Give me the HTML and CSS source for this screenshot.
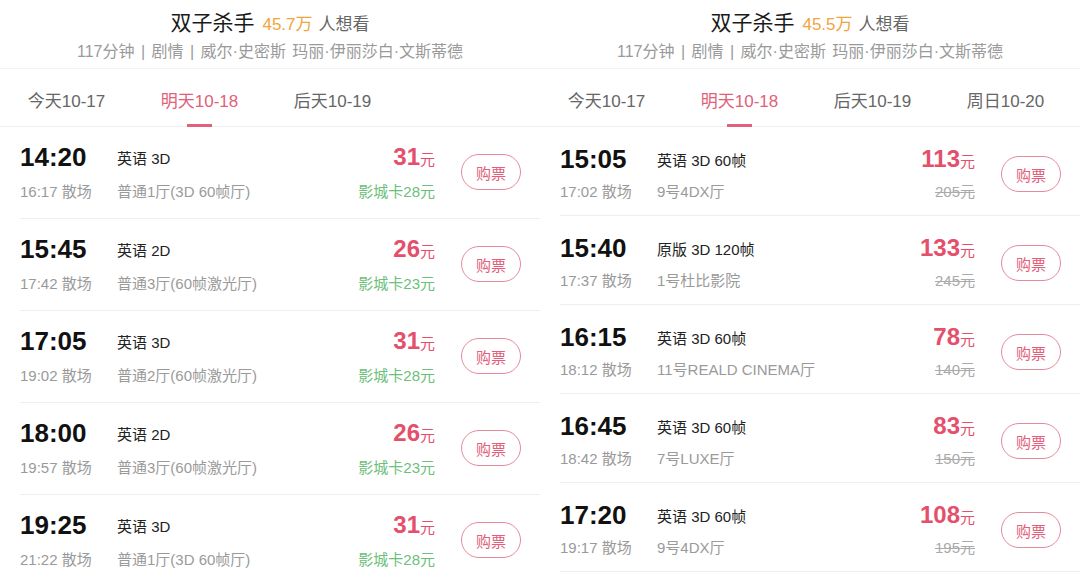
FILE: index.html
```html
<!DOCTYPE html>
<html lang="zh-CN">
<head>
    <meta charset="UTF-8">
    <meta name="viewport" content="width=device-width, initial-scale=1.0">
    <title>双子杀手 排片</title>
    <link rel="stylesheet" href="styles.css">
</head>
<body>
    <div class="panel">
        <div class="header">
            <div class="title">双子杀手 <span class="want">45.7万</span> <span class="want-label">人想看</span></div>
            <div class="info">117分钟 | 剧情 | 威尔·史密斯 玛丽·伊丽莎白·文斯蒂德</div>
        </div>
        <div class="tabs">
            <div class="tab">今天10-17</div>
            <div class="tab active">明天10-18</div>
            <div class="tab">后天10-19</div>
        </div>
        <div class="list">
            <div class="show">
                <div class="time">14:20</div>
                <div class="lang">英语 3D</div>
                <div class="price">31<small>元</small></div>
                <button class="buy">购票</button>
                <div class="end">16:17 散场</div>
                <div class="hall">普通1厅(3D 60帧厅)</div>
                <div class="card">影城卡28元</div>
            </div>
            <div class="show">
                <div class="time">15:45</div>
                <div class="lang">英语 2D</div>
                <div class="price">26<small>元</small></div>
                <button class="buy">购票</button>
                <div class="end">17:42 散场</div>
                <div class="hall">普通3厅(60帧激光厅)</div>
                <div class="card">影城卡23元</div>
            </div>
            <div class="show">
                <div class="time">17:05</div>
                <div class="lang">英语 3D</div>
                <div class="price">31<small>元</small></div>
                <button class="buy">购票</button>
                <div class="end">19:02 散场</div>
                <div class="hall">普通2厅(60帧激光厅)</div>
                <div class="card">影城卡28元</div>
            </div>
            <div class="show">
                <div class="time">18:00</div>
                <div class="lang">英语 2D</div>
                <div class="price">26<small>元</small></div>
                <button class="buy">购票</button>
                <div class="end">19:57 散场</div>
                <div class="hall">普通3厅(60帧激光厅)</div>
                <div class="card">影城卡23元</div>
            </div>
            <div class="show">
                <div class="time">19:25</div>
                <div class="lang">英语 3D</div>
                <div class="price">31<small>元</small></div>
                <button class="buy">购票</button>
                <div class="end">21:22 散场</div>
                <div class="hall">普通1厅(3D 60帧厅)</div>
                <div class="card">影城卡28元</div>
            </div>
        </div>
    </div>

    <div class="panel panel-b">
        <div class="header">
            <div class="title">双子杀手 <span class="want">45.5万</span> <span class="want-label">人想看</span></div>
            <div class="info">117分钟 | 剧情 | 威尔·史密斯 玛丽·伊丽莎白·文斯蒂德</div>
        </div>
        <div class="tabs">
            <div class="tab">今天10-17</div>
            <div class="tab active">明天10-18</div>
            <div class="tab">后天10-19</div>
            <div class="tab">周日10-20</div>
        </div>
        <div class="list">
            <div class="show">
                <div class="time">15:05</div>
                <div class="lang">英语 3D 60帧</div>
                <div class="price">113<small>元</small></div>
                <button class="buy">购票</button>
                <div class="end">17:02 散场</div>
                <div class="hall">9号4DX厅</div>
                <div class="orig">205元</div>
            </div>
            <div class="show">
                <div class="time">15:40</div>
                <div class="lang">原版 3D 120帧</div>
                <div class="price">133<small>元</small></div>
                <button class="buy">购票</button>
                <div class="end">17:37 散场</div>
                <div class="hall">1号杜比影院</div>
                <div class="orig">245元</div>
            </div>
            <div class="show">
                <div class="time">16:15</div>
                <div class="lang">英语 3D 60帧</div>
                <div class="price">78<small>元</small></div>
                <button class="buy">购票</button>
                <div class="end">18:12 散场</div>
                <div class="hall">11号REALD CINEMA厅</div>
                <div class="orig">140元</div>
            </div>
            <div class="show">
                <div class="time">16:45</div>
                <div class="lang">英语 3D 60帧</div>
                <div class="price">83<small>元</small></div>
                <button class="buy">购票</button>
                <div class="end">18:42 散场</div>
                <div class="hall">7号LUXE厅</div>
                <div class="orig">150元</div>
            </div>
            <div class="show">
                <div class="time">17:20</div>
                <div class="lang">英语 3D 60帧</div>
                <div class="price">108<small>元</small></div>
                <button class="buy">购票</button>
                <div class="end">19:17 散场</div>
                <div class="hall">9号4DX厅</div>
                <div class="orig">195元</div>
            </div>
        </div>
    </div>
</body>
</html>
```

FILE: styles.css
```css
body {
    margin: 0;
    height: 579px;
    overflow: hidden;
    display: flex;
    background: #fff;
    font-family: "Liberation Sans", "Noto Sans CJK SC", sans-serif;
    color: #222;
}
.panel {
    width: 540px;
    flex-shrink: 0;
}

/* Movie header */
.header {
    height: 68px;
    padding-top: 8px;
    box-sizing: border-box;
    text-align: center;
}
.title {
    font-size: 21px;
    line-height: 30px;
    color: #1a1a1a;
}
.want {
    font-size: 17px;
    color: #f0a53e;
    margin-left: 2px;
}
.want-label {
    font-size: 17px;
    color: #666;
}
.info {
    font-size: 16px;
    line-height: 24px;
    color: #9a9a9a;
    word-spacing: 2px;
}

/* Date tabs */
.tabs {
    display: flex;
    height: 59px;
    border-top: 1px solid #f3f3f3;
    border-bottom: 1px solid #eee;
    box-sizing: border-box;
}
.tab {
    width: 133px;
    position: relative;
    display: flex;
    align-items: center;
    justify-content: center;
    padding-top: 3px;
    font-size: 17px;
    color: #666;
}
.tab.active {
    color: #e1607a;
}
.tab.active::after {
    content: "";
    position: absolute;
    bottom: -1px;
    left: 54px;
    width: 25px;
    height: 3px;
    background: #e1607a;
}

/* Show rows */
.show {
    display: grid;
    grid-template-columns: 97px 1fr auto 60px;
    grid-template-rows: 30px 36px;
    height: 92px;
    box-sizing: border-box;
    margin-left: 20px;
    padding: 15px 19px 0 0;
    border-bottom: 1px solid #eee;
    align-items: center;
}
.panel-b .show {
    height: 89px;
    padding-top: 17px;
    grid-template-rows: 30px 32px;
}
.time {
    font-size: 26px;
    font-weight: bold;
    color: #111;
}
.lang {
    font-size: 15px;
    color: #222;
}
.price {
    font-size: 24px;
    font-weight: bold;
    color: #e4506b;
    text-align: right;
    margin-right: 26px;
}
.price small {
    font-size: 15px;
    font-weight: normal;
}
.buy {
    grid-row: 1 / span 2;
    grid-column: 4;
    align-self: start;
    margin-top: 12px;
    width: 60px;
    height: 36px;
    border: 1.5px solid #e5899b;
    border-radius: 18px;
    background: #fff;
    color: #e2607b;
    font-family: "Noto Sans CJK SC", sans-serif;
    font-size: 15px;
    padding: 0;
}
.end, .hall {
    font-size: 15px;
    color: #9a9a9a;
}
.card {
    font-size: 15px;
    color: #6cc07a;
    text-align: right;
    margin-right: 26px;
}
.orig {
    font-size: 15px;
    color: #aaa;
    text-decoration: line-through;
    text-align: right;
    margin-right: 26px;
}
```
